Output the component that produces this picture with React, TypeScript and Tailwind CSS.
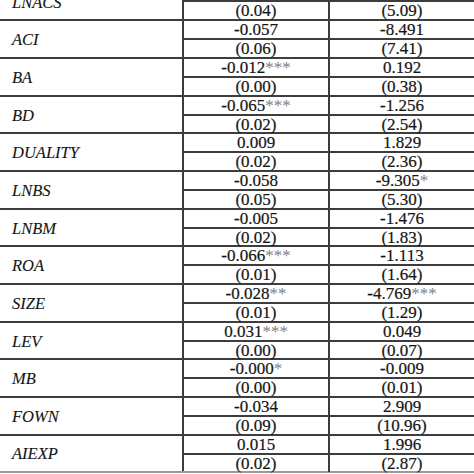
import React from 'react';

type Row = { name: string; c1: [string, string]; c2: [string, string] };

const ROWS: Row[] = [
  { name: 'LNACS', c1: ['', '(0.04)'], c2: ['', '(5.09)'] },
  { name: 'ACI', c1: ['-0.057', '(0.06)'], c2: ['-8.491', '(7.41)'] },
  { name: 'BA', c1: ['-0.012***', '(0.00)'], c2: ['0.192', '(0.38)'] },
  { name: 'BD', c1: ['-0.065***', '(0.02)'], c2: ['-1.256', '(2.54)'] },
  { name: 'DUALITY', c1: ['0.009', '(0.02)'], c2: ['1.829', '(2.36)'] },
  { name: 'LNBS', c1: ['-0.058', '(0.05)'], c2: ['-9.305*', '(5.30)'] },
  { name: 'LNBM', c1: ['-0.005', '(0.02)'], c2: ['-1.476', '(1.83)'] },
  { name: 'ROA', c1: ['-0.066***', '(0.01)'], c2: ['-1.113', '(1.64)'] },
  { name: 'SIZE', c1: ['-0.028**', '(0.01)'], c2: ['-4.769***', '(1.29)'] },
  { name: 'LEV', c1: ['0.031***', '(0.00)'], c2: ['0.049', '(0.07)'] },
  { name: 'MB', c1: ['-0.000*', '(0.00)'], c2: ['-0.009', '(0.01)'] },
  { name: 'FOWN', c1: ['-0.034', '(0.09)'], c2: ['2.909', '(10.96)'] },
  { name: 'AIEXP', c1: ['0.015', '(0.02)'], c2: ['1.996', '(2.87)'] },
];

// split "-0.012***" into value + stars so the stars can be drawn lighter
const Value = ({ v }: { v: string }) => {
  const m = v.match(/^([^*]*)(\*+)?$/);
  const num = m ? m[1] : v;
  const stars = m && m[2] ? m[2] : '';
  return (
    <span>
      {num}
      {stars && <span className="text-[#808080] [-webkit-text-stroke:0px]">{stars}</span>}
    </span>
  );
};

const Cell = ({ v, last }: { v: string; last?: boolean }) => (
  <div
    className={
      'flex items-center justify-center ' +
      (last ? 'flex-1' : 'w-[146px] border-r-2 border-[#3d3d3d]')
    }
  >
    <Value v={v} />
  </div>
);

export default function App() {
  return (
    <div className="w-[474px] h-[474px] overflow-hidden bg-white text-[#151515] font-['Liberation_Serif',serif] [-webkit-text-stroke:0.2px_#151515]">
      <div className="mt-[-16.37px]">
        {ROWS.map((r, i) => (
          <div
            key={r.name}
            className={
              'flex h-[37.67px] border-b-2 ' +
              (i === ROWS.length - 1 ? 'border-[#9a9a9a]' : 'border-[#3d3d3d]')
            }
          >
            <div className="w-[184px] border-r-2 border-[#3d3d3d] flex items-center pl-[12px] pt-[3px] italic text-[16.5px] [-webkit-text-stroke:0.1px_#151515]">
              {r.name}
            </div>
            <div className="flex-1 flex flex-col text-[17px] leading-none">
              <div className="flex h-[19px] border-b-2 border-[#3d3d3d]">
                <Cell v={r.c1[0]} />
                <Cell v={r.c2[0]} last />
              </div>
              <div className="flex flex-1">
                <Cell v={r.c1[1]} />
                <Cell v={r.c2[1]} last />
              </div>
            </div>
          </div>
        ))}
      </div>
    </div>
  );
}
